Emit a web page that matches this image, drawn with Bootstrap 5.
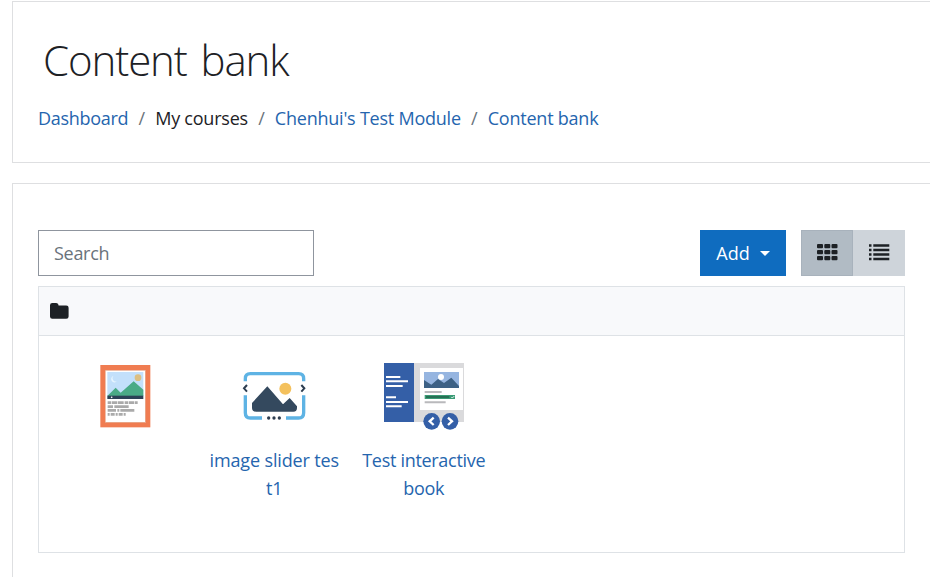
<!DOCTYPE html>
<html lang="en">
<head>
<meta charset="utf-8">
<meta name="viewport" content="width=device-width, initial-scale=1">
<title>Content bank</title>
<link rel="stylesheet" href="https://cdn.jsdelivr.net/npm/bootstrap@5.3.0/dist/css/bootstrap.min.css">
<style>
body{font-family:"Open Sans","Noto Sans",sans-serif;font-size:18px;line-height:28px;color:#1d2125;height:577px;letter-spacing:-.3px}
a{color:#2565ae;text-decoration:none}
.panel{border:1px solid #dedfe1;margin-left:12px;margin-right:-1px;background:#fff}
.page-head{margin-top:1px;height:162px;padding:28px 25px 0}
.page-title{font-size:42px;font-weight:300;line-height:60px;letter-spacing:-1.1px;word-spacing:4px;margin:0 0 14px 5px}
.crumbs{--bs-breadcrumb-item-padding-x:10.3px;--bs-breadcrumb-divider-color:#6a737b;font-size:18px;letter-spacing:-.23px}
.crumbs li:first-child{letter-spacing:-.3px}
.main-area{margin-top:20px;height:420px;padding:46px 25px 0}
.search-box{width:276px;height:46px;border:1px solid #8f959e;border-radius:0;padding:0 15px;font-size:18px;letter-spacing:-.3px}
.search-box::placeholder{color:#6a737b}
.add-btn{--bs-btn-bg:#0f6cbf;--bs-btn-border-color:#0f6cbf;width:86px;height:46px;border-radius:0;font-size:18px;letter-spacing:0;padding:0;margin-right:15px}
.add-btn::after{margin-left:10px;vertical-align:4px;border-width:5px 5px 0}
.view-btn{--bs-btn-bg:#ced4da;--bs-btn-border-color:#ced4da;--bs-btn-active-bg:#b1bbc4;--bs-btn-active-border-color:#a8b2bc;width:52px;height:46px;border-radius:0;padding:0 0 2px}
.view-btn svg{display:block;margin:0 auto}
.bank{border:1px solid #dee2e6;height:267px;margin-top:10px;width:867px}
.bank-head{height:49px;background:#f8f9fb;border-bottom:1px solid #dee2e6;padding:0 11px 1px}
.tiles{padding:19px 11px 0}
.tile{width:149.5px;text-align:center}
.tile svg{display:block;margin:0 auto 11px}
.tile a{display:block}
.slider-name{letter-spacing:-.15px}
</style>
</head>
<body class="overflow-hidden bg-white">
<div class="overflow-hidden h-100">
<header class="panel page-head">
<h1 class="page-title">Content bank</h1>
<nav aria-label="Breadcrumb"><ol class="breadcrumb crumbs mb-0 flex-nowrap text-nowrap">
<li class="breadcrumb-item"><a href="#">Dashboard</a></li>
<li class="breadcrumb-item">My courses</li>
<li class="breadcrumb-item"><a href="#">Chenhui's Test Module</a></li>
<li class="breadcrumb-item"><a href="#">Content bank</a></li>
</ol></nav>
</header>
<main class="panel main-area">
<div class="d-flex">
<input class="form-control search-box" type="text" placeholder="Search" aria-label="Search">
<button class="btn btn-primary add-btn dropdown-toggle ms-auto" type="button">Add</button>
<div class="d-flex">
<button class="btn view-btn active" type="button" aria-label="Icon view"><svg width="22" height="18" viewBox="0 0 22 18" fill="#1d2125"><rect x="1" y="1" width="6" height="4.3" rx="1"/><rect x="8.3" y="1" width="6" height="4.3" rx="1"/><rect x="15.5" y="1" width="6" height="4.3" rx="1"/><rect x="1" y="7" width="6" height="4.3" rx="1"/><rect x="8.3" y="7" width="6" height="4.3" rx="1"/><rect x="15.5" y="7" width="6" height="4.3" rx="1"/><rect x="1" y="13" width="6" height="4.3" rx="1"/><rect x="8.3" y="13" width="6" height="4.3" rx="1"/><rect x="15.5" y="13" width="6" height="4.3" rx="1"/></svg></button>
<button class="btn view-btn" type="button" aria-label="Details view"><svg width="22" height="18" viewBox="0 0 22 18" fill="#1d2125"><path d="M1 1.200h2.500v2.500H1zM5.300 1.200h16v2.500h-16zM1 5.700h2.500v2.500H1zM5.300 5.700h16v2.500h-16zM1 10.200h2.500v2.500H1zM5.300 10.200h16v2.500h-16zM1 14.700h2.500v2.500H1zM5.300 14.700h16v2.500h-16z"/></svg></button>
</div>
</div>
<section class="bank">
<div class="bank-head d-flex align-items-center"><svg width="19" height="16" viewBox="0 0 19 16"><path fill="#1d2125" d="M0 2.3Q0 0 2.3 0h4Q8.600 0 8.600 2.500h7.700Q18.600 2.500 18.600 4.800v8.700Q18.600 15.700 16.300 15.700h-14Q0 15.700 0 13.500z"/></svg></div>
<div class="tiles d-flex">
<div class="tile">
<svg width="70" height="80" viewBox="0 0 210 240">
<rect x="31" y="30" width="150" height="187" fill="#f07c51"/><rect x="45" y="45" width="123" height="159" fill="#e9a384"/><rect x="47" y="47" width="118" height="154" fill="#fff"/>
<rect x="52" y="51" width="108" height="72" fill="#c3e0fb"/><circle cx="144" cy="68" r="10" fill="#dcbf82"/><path fill="#e8f5ff" d="M70 63a10 10 0 1 0 11 16a10 10 0 0 1-11-16"/>
<path fill="#4aab87" d="M52 123l25-25 15 15 39-34 29 25v19z"/><rect x="52" y="122" width="108" height="10" fill="#2c4257"/><circle cx="65" cy="127" r="2.500" fill="#fff"/>
<g stroke="#aaa" stroke-width="8"><path stroke-dasharray="11 2 15 2 18 3" d="M53 143h90"/><path stroke-dasharray="16 4 43 2" d="M53 155h64"/><path stroke-dasharray="25 4 6 3 43 2" d="M53 166h80"/><path stroke-dasharray="6 3 12 3" d="M53 178h54"/></g></svg>
<a href="#" aria-label="Content item"></a>
</div>
<div class="tile">
<svg width="80" height="80" viewBox="0 0 240 240"><g transform="translate(3 22)">
<g fill="none" stroke="#5eb3e4" stroke-width="10"><path d="M31 57V49Q31 34 46 34H191Q206 34 206 49V57M31 99V151Q31 167 46 167H81M206 99V151Q206 167 191 167H153"/></g>
<path d="M36 68l-9 10 9 10M199 68l9 10-9 10" fill="none" stroke="#2d3d50" stroke-width="6"/>
<path fill="#34495e" d="M51 137V122L97 72l47 54 20-19 22 25v5Q186 148 175 148H63Q51 148 51 137"/><circle cx="151" cy="79" r="18" fill="#f4c15d"/>
<g fill="#2d3d50"><circle cx="101" cy="167" r="5"/><circle cx="117" cy="167" r="5"/><circle cx="133" cy="167" r="5"/></g></g></svg>
<a class="slider-name" href="#">image slider tes<br>t1</a>
</div>
<div class="tile">
<svg width="96" height="80" viewBox="0 0 288 240">
<rect x="113" y="24" width="151" height="177" fill="#dadadc"/><rect x="24" y="24" width="90" height="177" fill="#345fa7"/>
<path stroke="#fff" stroke-width="6" d="M30 66h43M30 79h66M30 93h50M30 127h30M30 141h66M30 154h47"/>
<rect x="132" y="39" width="129" height="126" fill="#fff"/><rect x="144" y="51" width="105" height="48" fill="#96b5e0"/><circle cx="195" cy="66" r="9" fill="#fff"/>
<path fill="#3d6185" d="M144 99V75l22 14 20-17 18 12 22-16 23 25v6z"/>
<path stroke="#b9b9bc" stroke-width="6" d="M146 111h51M146 142h63"/><rect x="146" y="120" width="91" height="12" fill="#3a9b75"/><path d="M150 126h70" stroke="#1e5b45" stroke-width="4"/><path d="M226 126l3 3 6-6" fill="none" stroke="#fff" stroke-width="2.500"/>
<g fill="#345fa7"><circle cx="167" cy="199" r="25"/><circle cx="222" cy="199" r="25"/></g><path d="M173 188l-12 11 12 11M216 188l12 11-12 11" fill="none" stroke="#fff" stroke-width="7"/></svg>
<a href="#">Test interactive<br>book</a>
</div>
</div>
</section>
</main>
</div>
<script src="https://cdn.jsdelivr.net/npm/bootstrap@5.3.0/dist/js/bootstrap.bundle.min.js"></script>
</body>
</html>
